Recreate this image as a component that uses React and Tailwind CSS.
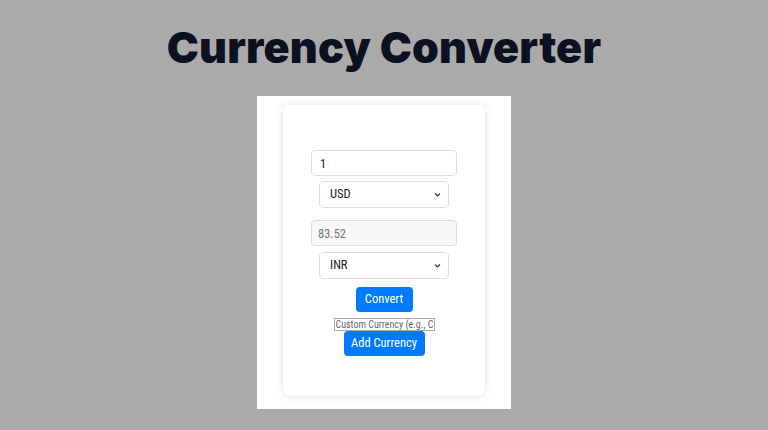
function Chevron() {
  return (
    <svg className="pointer-events-none absolute right-[8px] top-1/2 -translate-y-1/2" width="7" height="5" viewBox="0 0 7 5" fill="none">
      <path d="M1 1l2.5 2.5L6 1" stroke="#333" strokeWidth="1.2" />
    </svg>
  );
}

function Picker({ value, className }) {
  return (
    <div className={"relative w-[130px] h-[27px] " + className}>
      <select
        defaultValue={value}
        className="appearance-none w-full h-full border border-[#dddddd] rounded-[4px] pl-[10px] pr-[20px] text-[12.5px] text-[#222] bg-white outline-none"
      >
        <option>USD</option>
        <option>INR</option>
      </select>
      <Chevron />
    </div>
  );
}

export default function App() {
  return (
    <div className="min-h-[430px] w-full bg-[#aaaaaa] flex flex-col items-center font-['Roboto_Condensed','Liberation_Sans',sans-serif]">
      <h1 className="mt-[21px] text-[43px] leading-[52px] font-black text-[#0b1120] tracking-[0.2px] font-['Inter','DejaVu_Sans',sans-serif]">
        Currency Converter
      </h1>
      <div className="mt-[23px] w-[254px] h-[313px] bg-white pt-[9px] pl-[26px]">
        <div className="w-[202px] h-[291px] bg-white rounded-[8px] shadow-[0_0_10px_rgba(0,0,0,0.12)] flex flex-col items-center pt-[45px]">
          <input
            type="text"
            defaultValue="1"
            className="w-[146px] h-[26px] border border-[#dddddd] rounded-[4px] px-[8px] text-[12.5px] text-[#222] outline-none"
          />
          <Picker value="USD" className="mt-[5px]" />
          <input
            type="text"
            readOnly
            value="83.52"
            className="mt-[12px] w-[146px] h-[26px] border border-[#dddddd] rounded-[4px] px-[6px] text-[12.5px] text-[#777] bg-[#f7f7f7] outline-none"
          />
          <Picker value="INR" className="mt-[6px]" />
          <button className="mt-[8px] w-[57px] h-[25px] bg-[#007bff] text-white text-[12.5px] rounded-[4px]">Convert</button>
          <input
            type="text"
            placeholder="Custom Currency (e.g., CAD)"
            className="mt-[6px] w-[101px] h-[13px] border border-[#aaa] px-[1px] text-[10px] leading-[11px] placeholder:text-[#666] outline-none"
          />
          <button className="w-[81px] h-[25px] bg-[#007bff] text-white text-[12.5px] rounded-[4px]">Add Currency</button>
        </div>
      </div>
    </div>
  );
}
